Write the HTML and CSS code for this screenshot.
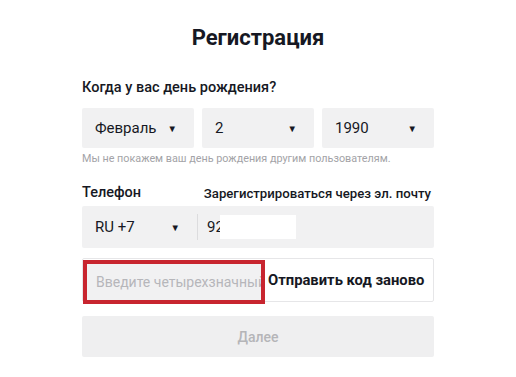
FILE: index.html
```html
<!DOCTYPE html>
<html lang="ru">
<head>
    <meta charset="UTF-8">
    <meta name="viewport" content="width=device-width, initial-scale=1.0">
    <title>Регистрация</title>
    <link rel="stylesheet" href="styles.css">
</head>
<body>
    <div class="signup">
        <h1 class="signup-title">Регистрация</h1>

        <!-- дата рождения -->
        <div class="field-label">Когда у вас день рождения?</div>
        <div class="birthday">
            <div class="select">Февраль <span class="arrow">▼</span></div>
            <div class="select">2 <span class="arrow">▼</span></div>
            <div class="select">1990 <span class="arrow">▼</span></div>
        </div>
        <div class="hint">Мы не покажем ваш день рождения другим пользователям.</div>

        <!-- телефон -->
        <div class="phone-head">
            <span class="field-label">Телефон</span>
            <a class="switch-link">Зарегистрироваться через эл. почту</a>
        </div>
        <div class="phone-box">
            <div class="country">RU +7 <span class="arrow">▼</span></div>
            <div class="phone-number">92<span class="redact"></span></div>
        </div>

        <!-- код подтверждения -->
        <div class="code-row">
            <input type="text" class="code-input" placeholder="Введите четырехзначный код">
            <button class="resend-btn">Отправить код заново</button>
        </div>

        <button class="next-btn" disabled>Далее</button>
    </div>
</body>
</html>
```

FILE: styles.css
```css
* {
    margin: 0;
    padding: 0;
    box-sizing: border-box;
}
body {
    font-family: 'Roboto', 'Liberation Sans', sans-serif;
    background: #fff;
    color: #161823;
}
.signup {
    width: 352px;
    margin: 0 auto;
    padding-top: 23px;
}
.signup-title {
    font-size: 22px;
    line-height: 30px;
    font-weight: 700;
    text-align: center;
    margin-bottom: 26px;
}
.field-label {
    font-size: 14.5px;
    line-height: 18px;
    font-weight: 500;
}
.birthday {
    display: flex;
    gap: 8px;
    margin-top: 11px;
}
.select {
    flex: 1;
    min-width: 0;
    height: 40px;
    background: #f1f1f2;
    border-radius: 2px;
    display: flex;
    align-items: center;
    justify-content: space-between;
    padding: 0 17px 0 13px;
    font-size: 15px;
}
.arrow {
    font-size: 9.5px;
    color: #161823;
}
.hint {
    font-size: 10.8px;
    line-height: 14px;
    color: #a3a3a7;
    margin-top: 4px;
}
.phone-head {
    display: flex;
    justify-content: space-between;
    align-items: center;
    margin-top: 18px;
}
.switch-link {
    font-size: 13.2px;
    font-weight: 500;
    color: #161823;
    padding-right: 3px;
}
.phone-box {
    display: flex;
    align-items: center;
    height: 42px;
    margin-top: 4px;
    background: #f1f1f2;
    border-radius: 2px;
}
.country {
    width: 116px;
    display: flex;
    justify-content: space-between;
    align-items: center;
    padding: 0 17px 0 13px;
    font-size: 15px;
    border-right: 1px solid #dcdcde;
    height: 26px;
}
.phone-number {
    display: flex;
    align-items: center;
    padding-left: 9px;
    font-size: 15px;
}
.redact {
    display: inline-block;
    width: 76px;
    height: 24px;
    background: #fff;
    margin-left: -4px;
}
.code-row {
    display: flex;
    align-items: center;
    height: 44px;
    margin-top: 10px;
    border: 1px solid #e6e6e8;
    border-radius: 2px;
}
.code-input {
    width: 182px;
    height: 44px;
    margin-top: 3px;
    border: 4px solid #c8252f;
    border-radius: 0;
    background: #f1f1f2;
    color: #161823;
    font-family: inherit;
    font-size: 14px;
    padding-left: 9px;
    outline: none;
}
.code-input::placeholder {
    color: #b6b6ba;
}
.resend-btn {
    flex: 1;
    border: none;
    background: none;
    font-family: inherit;
    font-size: 14.8px;
    font-weight: 700;
    color: #161823;
    text-align: left;
    padding-left: 3px;
    white-space: nowrap;
}
.next-btn {
    display: block;
    width: 100%;
    height: 41px;
    margin-top: 14px;
    border: none;
    border-radius: 2px;
    background: #efeff0;
    color: #b5b5b8;
    font-family: inherit;
    font-size: 14px;
    font-weight: 500;
}
```
